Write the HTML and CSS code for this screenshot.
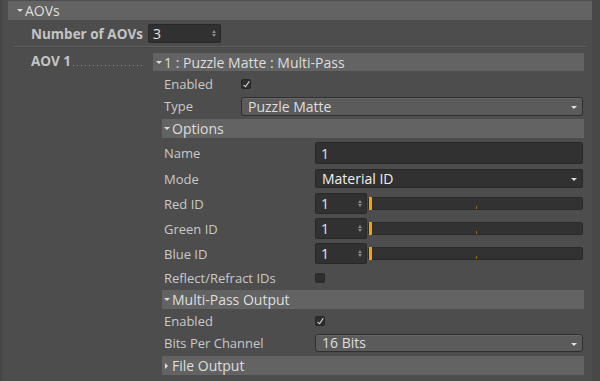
FILE: index.html
```html
<!DOCTYPE html>
<html>
<head>
<meta charset="utf-8">
<link rel="stylesheet" href="styles.css">
</head>
<body>
<div class="panel">
  <div class="main">
    <div class="group-head"><span class="tri-down"></span>AOVs</div>
    <div class="num-row">
      <span class="bold-label">Number of AOVs</span>
      <div class="field dark num-box"><span>3</span><span class="spin"></span></div>
    </div>
    <div class="sep"></div>
    <div class="aov">
      <div class="aov-label"><span class="bold-label">AOV 1</span><span class="leader"></span></div>
      <div class="aov-body">
        <div class="sub-head"><span class="tri-down"></span>1 : Puzzle Matte : Multi-Pass</div>
        <div class="row r-en1"><span class="lbl1">Enabled</span><span class="check on"></span></div>
        <div class="row r-type"><span class="lbl1">Type</span><div class="field drop light grow">Puzzle Matte<span class="arrow"></span></div></div>
        <div class="sub-head inner r-opt"><span class="tri-down"></span>Options</div>
        <div class="row r-name"><span class="lbl2">Name</span><div class="field dark grow name-box">1</div></div>
        <div class="row r-mode"><span class="lbl2">Mode</span><div class="field drop dark grow mode-box">Material ID<span class="arrow"></span></div></div>
        <div class="row r-id r-red"><span class="lbl2">Red ID</span><div class="field dark id-box"><span>1</span><span class="spin"></span></div><div class="slider"><span class="knob"></span><span class="tick"></span></div></div>
        <div class="row r-id"><span class="lbl2">Green ID</span><div class="field dark id-box"><span>1</span><span class="spin"></span></div><div class="slider"><span class="knob"></span><span class="tick"></span></div></div>
        <div class="row r-id"><span class="lbl2">Blue ID</span><div class="field dark id-box"><span>1</span><span class="spin"></span></div><div class="slider"><span class="knob"></span><span class="tick"></span></div></div>
        <div class="row r-refl"><span class="lbl2">Reflect/Refract IDs</span><span class="check"></span></div>
        <div class="sub-head inner r-mp"><span class="tri-down"></span>Multi-Pass Output</div>
        <div class="row r-en2"><span class="lbl2">Enabled</span><span class="check on"></span></div>
        <div class="row r-bits"><span class="lbl2">Bits Per Channel</span><div class="field drop light grow bits-box">16 Bits<span class="arrow"></span></div></div>
        <div class="sub-head inner r-file"><span class="tri-right"></span>File Output</div>
      </div>
    </div>
  </div>
  <div class="edge"></div>
</div>
</body>
</html>
```

FILE: styles.css
```css
* { box-sizing: border-box; }
html, body {
  margin: 0;
  padding: 0;
  background: #4d4d4d;
  width: 600px;
  height: 381px;
  overflow: hidden;
}
body {
  font-family: "Open Sans", "Noto Sans", sans-serif;
  font-size: 13px;
  color: #c9c9c9;
}
.panel {
  display: flex;
  height: 381px;
  border-left: 2px solid #474747;
}
.main {
  flex: 1;
  display: flex;
  flex-direction: column;
}
.edge {
  flex: 0 0 8px;
  background: #484848;
}
.group-head {
  margin: 1px 0 0 6px;
  height: 19px;
  background: #636363;
  color: #dedede;
  font-size: 14px;
  display: flex;
  align-items: center;
  padding-left: 9px;
}
.tri-down {
  width: 0;
  height: 0;
  border-left: 3px solid transparent;
  border-right: 3px solid transparent;
  border-top: 3px solid #dcdcdc;
  margin-right: 2px;
}
.tri-right {
  width: 0;
  height: 0;
  border-top: 3px solid transparent;
  border-bottom: 3px solid transparent;
  border-left: 3px solid #dcdcdc;
  margin-right: 4px;
  margin-left: 1px;
}
.bold-label {
  font-weight: bold;
  color: #c4c4c4;
  font-size: 13.5px;
}
.num-row {
  display: flex;
  align-items: center;
  margin-top: 4px;
  height: 19px;
  padding-left: 29px;
}
.num-row .bold-label { width: 117px; }
.field {
  height: 19px;
  display: flex;
  align-items: center;
  border-radius: 2px;
  font-size: 14px;
  position: relative;
}
.dark {
  background: #313131;
  border: 1px solid #282828;
  color: #e2e2e2;
}
.light {
  background: #5b5b5b;
  border: 1px solid #2f2f2f;
  box-shadow: inset 0 1px 0 #676767;
  color: #dedede;
  border-radius: 3px;
}
.num-box {
  width: 73px;
  padding-left: 4px;
  justify-content: space-between;
}
.spin {
  width: 3px;
  height: 7px;
  margin-right: 4px;
  position: relative;
}
.spin::before, .spin::after {
  content: "";
  position: absolute;
  left: -1px;
  border-left: 2.5px solid transparent;
  border-right: 2.5px solid transparent;
}
.spin::before { top: 0; border-bottom: 3px solid #8a8a8a; }
.spin::after { bottom: 0; border-top: 3px solid #8a8a8a; }
.sep {
  margin: 3px 6px 0 12px;
  height: 1px;
  background: #5e5e5e;
  box-shadow: 0 1px 0 #474747;
}
.aov {
  display: flex;
  margin-top: 6px;
}
.aov-label {
  flex: 0 0 151px;
  display: flex;
  align-items: flex-end;
  height: 17px;
  padding-left: 29px;
}
.leader {
  flex: 0 0 72px;
  margin-left: 2px;
  margin-bottom: 4px;
  height: 1px;
  background-image: linear-gradient(to right, #8c8c8c 1px, transparent 1px);
  background-size: 4px 1px;
}
.aov-body {
  flex: 0 0 431px;
  display: flex;
  flex-direction: column;
}
.sub-head {
  height: 18px;
  background: #636363;
  color: #dedede;
  font-size: 14px;
  display: flex;
  align-items: center;
  padding-left: 3px;
}
.sub-head.inner {
  margin-left: 9px;
  height: 19px;
  padding-left: 2px;
}
.row {
  display: flex;
  align-items: center;
  height: 20px;
}
.lbl1 {
  flex: 0 0 88px;
  padding-left: 11px;
}
.lbl2 {
  flex: 0 0 162px;
  padding-left: 11px;
}
.grow { flex: 1; margin-right: 1px; }
.drop { padding-left: 6px; }
.arrow {
  position: absolute;
  right: 5px;
  top: 8px;
  border-left: 3px solid transparent;
  border-right: 3px solid transparent;
  border-top: 3px solid #e0e0e0;
}
.check {
  width: 10px;
  height: 10px;
  border-radius: 2px;
  background: #2f2f2f;
  border: 1px solid #262626;
  position: relative;
}
.check.on::after {
  content: "";
  position: absolute;
  left: 3px;
  top: 0px;
  width: 2px;
  height: 6px;
  border-right: 1.5px solid #e8e8e8;
  border-bottom: 1.5px solid #e8e8e8;
  transform: rotate(35deg);
}
.r-en1 { margin-top: 3px; }
.r-type { margin-top: 2px; }
.r-opt { margin-top: 3px; }
.r-name { margin-top: 4px; height: 22px; }
.r-name .field { height: 22px; padding-left: 5px; }
.r-mode { margin-top: 5px; height: 19px; }
.mode-box { height: 19px; color: #f0f0f0; }
.r-id { margin-top: 4px; height: 21px; }
.r-red { margin-top: 5px; }
.id-box {
  flex: 0 0 52px;
  height: 21px;
  padding-left: 5px;
  justify-content: space-between;
}
.slider {
  flex: 1;
  margin-right: 1px;
  height: 13px;
  background: #323232;
  border: 1px solid #2a2a2a;
  border-radius: 2px;
  position: relative;
  margin-left: 1px;
}
.knob {
  position: absolute;
  left: 0;
  top: -1px;
  width: 3px;
  height: 13px;
  background: #f2a20a;
}
.tick {
  position: absolute;
  left: 107px;
  bottom: 0;
  width: 1px;
  height: 3px;
  background: #9a6a10;
}
.r-refl { margin-top: 4px; height: 20px; }
.r-mp { margin-top: 2px; }
.r-en2 { margin-top: 2px; height: 20px; }
.r-bits { margin-top: 2px; height: 19px; }
.bits-box { height: 18px; }
.r-file { margin-top: 4px; height: 20px; }
```
